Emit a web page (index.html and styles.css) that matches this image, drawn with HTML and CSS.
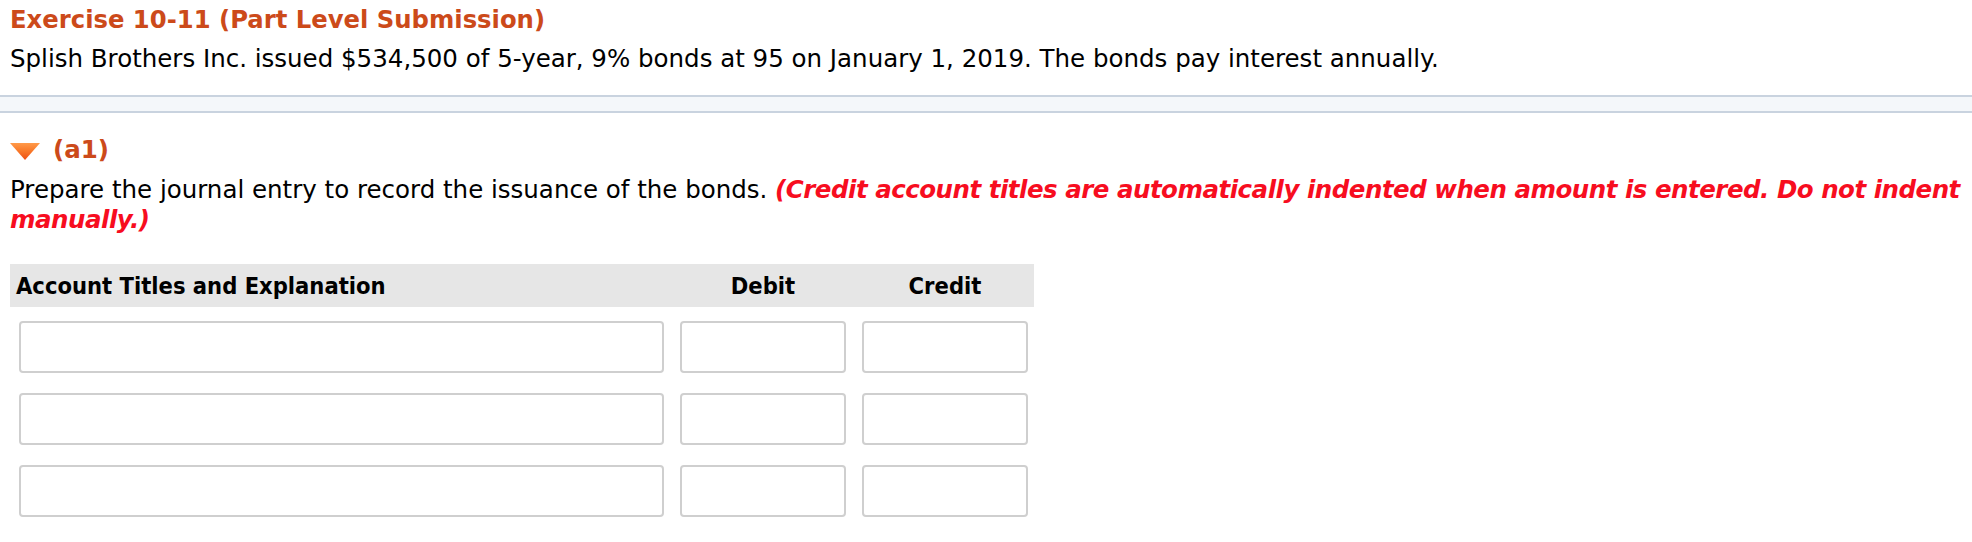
FILE: index.html
```html
<!DOCTYPE html>
<html lang="en">
<head>
<meta charset="utf-8">
<title>Exercise 10-11</title>
<link rel="stylesheet" href="styles.css">
</head>
<body>
<div class="page">
  <h1 class="title">Exercise 10-11 (Part Level Submission)</h1>
  <p class="intro">Splish Brothers Inc. issued $534,500 of 5-year, 9% bonds at 95 on January 1, 2019. The bonds pay interest annually.</p>
</div>
<div class="divider"></div>
<div class="page">
  <div class="part-head">
    <svg class="toggle" width="30" height="17" viewBox="0 0 30 17" aria-hidden="true">
      <defs>
        <linearGradient id="tg" x1="0" y1="0" x2="0" y2="1">
          <stop offset="0" stop-color="#ff9a4a"/>
          <stop offset="0.45" stop-color="#f97a2a"/>
          <stop offset="1" stop-color="#ee4e12"/>
        </linearGradient>
      </defs>
      <polygon points="0,0 30,0 15,17" fill="url(#tg)"/>
    </svg>
    <span class="part-label">(a1)</span>
  </div>
  <p class="instr">Prepare the journal entry to record the issuance of the bonds. <em class="note">(Credit account titles are automatically indented when amount is entered. Do not indent manually.)</em></p>

  <div class="journal">
    <div class="jrow jhead">
      <div class="h-acct">Account Titles and Explanation</div>
      <div class="h-num">Debit</div>
      <div class="h-num">Credit</div>
    </div>
    <div class="jrow jline">
      <input class="box" type="text" aria-label="Account title">
      <input class="box" type="text" aria-label="Debit">
      <input class="box" type="text" aria-label="Credit">
    </div>
    <div class="jrow jline">
      <input class="box" type="text" aria-label="Account title">
      <input class="box" type="text" aria-label="Debit">
      <input class="box" type="text" aria-label="Credit">
    </div>
    <div class="jrow jline">
      <input class="box" type="text" aria-label="Account title">
      <input class="box" type="text" aria-label="Debit">
      <input class="box" type="text" aria-label="Credit">
    </div>
  </div>
</div>
</body>
</html>
```

FILE: styles.css
```css
html, body {
  margin: 0;
  padding: 0;
  background: #ffffff;
}

body {
  font-family: "DejaVu Sans", Verdana, sans-serif;
  font-size: 24.5px;
  line-height: 30px;
  color: #000000;
}

.page {
  padding-left: 10px;
}

.title {
  margin: 0;
  padding-top: 5px;
  font-size: 24.3px;
  line-height: 30px;
  font-weight: bold;
  color: #cc4a1a;
}

.intro {
  margin: 9px 0 0 0;
}

.divider {
  margin-top: 21px;
  height: 14px;
  background: #f4f7fa;
  border-top: 2px solid #c9d3df;
  border-bottom: 2px solid #c9d3df;
}

.part-head {
  margin-top: 22px;
  display: flex;
  align-items: center;
  gap: 13px;
  height: 30px;
}

.toggle {
  display: block;
  margin-top: 3px;
}

.part-label {
  font-weight: bold;
  color: #cc4a1a;
}

.instr {
  margin: 10px 0 0 0;
  padding-right: 0;
}

.note {
  font-weight: bold;
  font-style: italic;
  color: #f70d1f;
  letter-spacing: -0.5px;
}

.journal {
  margin-top: 29px;
  width: 1024px;
}

.jrow {
  display: grid;
  grid-template-columns: 645px 166px 166px;
  column-gap: 16px;
  padding: 0 6px 0 9px;
}

.jhead {
  height: 43px;
  align-items: center;
  background: #e6e6e6;
  font-family: "DejaVu Sans Condensed", "DejaVu Sans", sans-serif;
  font-weight: bold;
  font-size: 23.5px;
}

.h-acct {
  margin-left: -3px;
}

.h-num {
  text-align: center;
}

.jline {
  margin-top: 20px;
}

.jhead + .jline {
  margin-top: 14px;
}

.box {
  display: block;
  box-sizing: border-box;
  width: 100%;
  height: 52px;
  margin: 0;
  padding: 0 8px;
  border: 2px solid #cfcfcf;
  border-radius: 4px;
  background: #ffffff;
  font-family: "DejaVu Sans", sans-serif;
  font-size: 21px;
  outline: none;
}
```
